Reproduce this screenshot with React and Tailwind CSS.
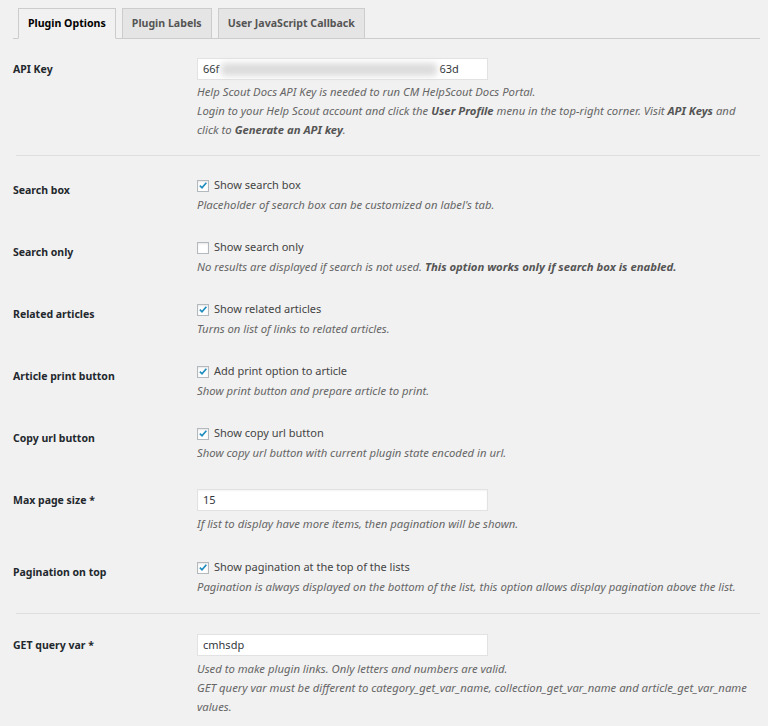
import React from "react";

const font = { fontFamily: '"Noto Sans", "Open Sans", Arial, sans-serif' };

function Check({ on }) {
  return (
    <span className="inline-flex items-center justify-center w-[12px] h-[12px] border border-[#b4b9be] bg-white shadow-[inset_0_1px_2px_rgba(0,0,0,0.1)] mr-[5px] shrink-0">
      {on && (
        <svg viewBox="0 0 12 12" className="w-[11px] h-[11px]">
          <path d="M2.2 6.2 L4.8 8.8 L10 2.6" fill="none" stroke="#1e8cbe" strokeWidth="2" />
        </svg>
      )}
    </span>
  );
}

function Label({ children, top }) {
  return (
    <div className={`w-[184px] shrink-0 font-bold text-[10.5px] text-[#23282d] leading-[19px] ${top}`}>
      {children}
    </div>
  );
}

function Desc({ children }) {
  return <p className="italic text-[11.3px] text-[#666] leading-[19px] whitespace-nowrap">{children}</p>;
}

function CheckRow({ label, text, on, children }) {
  return (
    <div className="flex pt-[12px] pb-[12px]">
      <Label top="pt-[5px]">{label}</Label>
      <div>
        <div className="flex items-center h-[19px] text-[#444]">
          <Check on={on} />
          {text}
        </div>
        {children}
      </div>
    </div>
  );
}

function InputRow({ label, value, children }) {
  return (
    <div className="flex pt-[15px] pb-[13px]">
      <Label top="pt-[2px]">{label}</Label>
      <div>
        <div className="w-[291px] h-[22px] bg-white border border-[#e2e2e2] shadow-[inset_0_1px_2px_rgba(0,0,0,0.05)] flex items-center px-[5px] text-[#32373c] mb-[3px]">
          {value}
        </div>
        {children}
      </div>
    </div>
  );
}

function Tab({ children, active }) {
  if (active)
    return (
      <div className="h-[31px] px-[9px] flex items-center border border-[#ccc] border-b-[#f1f1f1] bg-[#f1f1f1] font-bold text-[10.6px] text-[#000] -mb-px">
        {children}
      </div>
    );
  return (
    <div className="ml-[6px] h-[30px] px-[9px] flex items-center border border-[#ccc] border-b-0 bg-[#e5e5e5] font-bold text-[10.6px] text-[#555]">
      {children}
    </div>
  );
}

export default function App() {
  return (
    <div className="bg-[#f1f1f1] w-[768px] h-[726px] overflow-hidden text-[11px]" style={font}>
      <div className="pl-[13px] pr-[8px] pt-[8px]">
        <div className="flex items-end pl-[5px] border-b border-[#ccc] h-[31px]">
          <Tab active>Plugin Options</Tab>
          <Tab>Plugin Labels</Tab>
          <Tab>User JavaScript Callback</Tab>
        </div>

        <div className="flex pt-[19px] pb-[16px]">
          <Label top="pt-[2px]">API Key</Label>
          <div>
            <div className="w-[291px] h-[22px] bg-white border border-[#e2e2e2] flex items-center px-[5px] text-[#32373c] mb-[2px]">
              <span>66f</span>
              <span className="mx-[2px] w-[216px] h-[13px] rounded-sm bg-[#dcdcdc] blur-[3px]" />
              <span>63d</span>
            </div>
            <Desc>Help Scout Docs API Key is needed to run CM HelpScout Docs Portal.</Desc>
            <Desc>
              Login to your Help Scout account and click the <b className="text-[#555]">User Profile</b> menu in the top-right corner. Visit{" "}
              <b className="text-[#555]">API Keys</b> and
            </Desc>
            <Desc>
              click to <b className="text-[#555]">Generate an API key</b>.
            </Desc>
          </div>
        </div>

        <div className="ml-[3px] border-t border-[#dedede]" />

        <div className="pt-[8px]">
          <CheckRow label="Search box" text="Show search box" on>
            <Desc>Placeholder of search box can be customized on label's tab.</Desc>
          </CheckRow>
          <CheckRow label="Search only" text="Show search only">
            <Desc>
              No results are displayed if search is not used. <b className="text-[#555]">This option works only if search box is enabled.</b>
            </Desc>
          </CheckRow>
          <CheckRow label="Related articles" text="Show related articles" on>
            <Desc>Turns on list of links to related articles.</Desc>
          </CheckRow>
          <CheckRow label="Article print button" text="Add print option to article" on>
            <Desc>Show print button and prepare article to print.</Desc>
          </CheckRow>
          <CheckRow label="Copy url button" text="Show copy url button" on>
            <Desc>Show copy url button with current plugin state encoded in url.</Desc>
          </CheckRow>
          <InputRow label="Max page size *" value="15">
            <Desc>If list to display have more items, then pagination will be shown.</Desc>
          </InputRow>
          <CheckRow label="Pagination on top" text="Show pagination at the top of the lists" on>
            <Desc>Pagination is always displayed on the bottom of the list, this option allows display pagination above the list.</Desc>
          </CheckRow>
        </div>

        <div className="mt-[5px] ml-[3px] border-t border-[#dedede]" />

        <div className="pt-[20px] flex">
          <Label top="pt-[2px]">GET query var *</Label>
          <div>
            <div className="w-[291px] h-[22px] bg-white border border-[#e2e2e2] flex items-center px-[5px] text-[#32373c] mb-[3px]">
              cmhsdp
            </div>
            <Desc>Used to make plugin links. Only letters and numbers are valid.</Desc>
            <Desc>GET query var must be different to category_get_var_name, collection_get_var_name and article_get_var_name</Desc>
            <Desc>values.</Desc>
          </div>
        </div>
      </div>
    </div>
  );
}
